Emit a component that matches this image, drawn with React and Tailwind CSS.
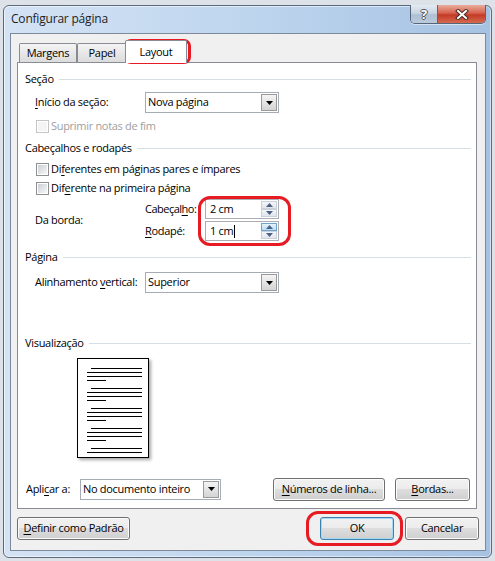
import React from 'react'

function U({ children }) {
  return <span className="underline underline-offset-[2px] decoration-[1px]">{children}</span>
}

function Section({ title, className }) {
  return (
    <div className={`flex items-center h-[14px] pl-[7px] pr-[5px] ${className}`}>
      <span>{title}</span>
      <div className="flex-1 h-px bg-[#d5dfe5] ml-[5px]" />
    </div>
  )
}

function Checkbox({ disabled }) {
  return (
    <span className={`block w-[13px] h-[13px] shrink-0 border p-px bg-white ${disabled ? 'border-[#c5c5c5]' : 'border-[#8e8f8f]'}`}>
      <span className={`block w-full h-full ${disabled ? 'bg-[#f4f4f4]' : 'bg-linear-to-br from-[#cbcfd5] to-[#f7f7f7]'}`} />
    </span>
  )
}

function Select({ value, className }) {
  return (
    <div className={`flex h-[21px] bg-white border border-[#a5acb5] ${className}`}>
      <span className="flex-1 flex items-center pl-[2px]">{value}</span>
      <span className="w-[16px] m-px flex items-center justify-center border border-[#9a9a9a] bg-linear-to-b from-[#f4f4f4] to-[#d4d4d4]">
        <svg width="7" height="4" viewBox="0 0 7 4">
          <path d="M0 0h7L3.5 4z" fill="#000" />
        </svg>
      </span>
    </div>
  )
}

function SpinBtn({ up, hot }) {
  return (
    <span className={`flex-1 flex items-center justify-center border ${hot ? 'border-[#6fa3c9] bg-linear-to-b from-[#e6f3fb] to-[#b9dcf3]' : 'border-[#c9d2dc] bg-linear-to-b from-[#f3f5f8] to-[#e1e6ec]'}`}>
      <svg width="7" height="4" viewBox="0 0 7 4">
        <path d={up ? 'M0 4h7L3.5 0z' : 'M0 0h7L3.5 4z'} fill="#4d6185" />
      </svg>
    </span>
  )
}

function Spin({ value, caret, hot }) {
  return (
    <div className="flex h-[20px] w-[74px] bg-white border border-[#abadb3]">
      <span className="flex-1 flex items-center pl-[4px]">
        {value}
        {caret && <span className="w-px h-[13px] bg-black ml-px" />}
      </span>
      <div className="flex flex-col w-[16px] my-px mr-px">
        <SpinBtn up hot={hot} />
        <SpinBtn />
      </div>
    </div>
  )
}

function Btn({ children, className, def }) {
  return (
    <div
      className={`flex items-center justify-center h-[23px] rounded-[3px] border whitespace-nowrap bg-[linear-gradient(#f2f2f2,#ebebeb_50%,#dddddd_50%,#cfcfcf)] ${
        def ? 'border-[#3c7fb1] shadow-[inset_0_0_0_1px_#a7d9f5]' : 'border-[#707070] shadow-[inset_0_0_0_1px_#fbfbfb]'
      } ${className}`}
    >
      {children}
    </div>
  )
}

function Tab({ children, className }) {
  return (
    <div className={`flex items-center justify-center border border-b-0 border-[#898c95] rounded-t-[2px] ${className}`}>
      {children}
    </div>
  )
}

function Line({ w, ml, mt }) {
  return <div className={`h-px bg-black ${w} ${ml} ${mt}`} />
}

function Group({ lines, first }) {
  return (
    <div className={first ? '' : 'mt-[7px]'}>
      <Line w="w-[51px]" ml="ml-[13px]" mt="" />
      {lines > 1 && <Line w="w-[55px]" ml="ml-[9px]" mt="mt-[3px]" />}
      {lines > 2 && <Line w="w-[55px]" ml="ml-[9px]" mt="mt-[3px]" />}
      {lines > 3 && <Line w="w-[19px]" ml="ml-[9px]" mt="mt-[3px]" />}
    </div>
  )
}

export default function App() {
  return (
    <div className="w-[495px] h-[561px] bg-[#dde2e8] relative overflow-hidden whitespace-nowrap font-['Open_Sans','Liberation_Sans',Arial,sans-serif] text-[11px] tracking-[-0.3px] text-black">
      <div className="ml-[3px] mt-[5px] w-[489px] h-[553px] rounded-[6px] border border-[#5b6a7c] bg-linear-to-r from-[#d4e3f4] via-[#bed5ee] to-[#a6c2e3] shadow-[inset_0_0_0_1px_rgba(255,255,255,0.55)] flex flex-col pl-[6px] pr-[5px] pb-[6px]">
        {/* title bar */}
        <div className="flex h-[27px] shrink-0">
          <span className="pl-[1px] pt-[5px] text-[12px] leading-[16px] tracking-[-0.2px] text-[#1e1e1e]">Configurar página</span>
          <div className="ml-auto -mt-px flex h-[19px] rounded-b-[5px] border border-t-0 border-[#566679] overflow-hidden shadow-[0_1px_0_rgba(255,255,255,0.5)]">
            <div className="w-[27px] flex items-center justify-center border-r border-[#566679] bg-[linear-gradient(#e3eaf2,#c9d5e3_45%,#aebfd3_55%,#bccbdc)]">
              <span className="font-bold text-[13px] leading-none text-white [text-shadow:-1px_0_#4a5562,1px_0_#4a5562,0_-1px_#4a5562,0_1px_#4a5562]">?</span>
            </div>
            <div className="w-[47px] flex items-center justify-center bg-[linear-gradient(#e9ab9c,#d6624e_45%,#c43a24_55%,#d66a52)]">
              <svg width="14" height="11" viewBox="0 0 14 11">
                <path d="M3 2l8 7M11 2l-8 7" stroke="#4a2a26" strokeWidth="4" strokeLinecap="square" />
                <path d="M3 2l8 7M11 2l-8 7" stroke="#fff" strokeWidth="2" strokeLinecap="square" />
              </svg>
            </div>
          </div>
        </div>

        {/* client */}
        <div className="h-[518px] border border-[#7d8a99] bg-[#f0f0f0] flex flex-col">
          <div className="mt-[6px] flex items-end h-[22px] pl-[8px] relative z-10">
            <Tab className="w-[58px] h-[19px] bg-linear-to-b from-[#f4f4f4] to-[#dcdcdc]">Margens</Tab>
            <Tab className="w-[50px] h-[19px] bg-linear-to-b from-[#f4f4f4] to-[#dcdcdc]">Papel</Tab>
            <Tab className="w-[62px] h-[23px] -ml-[2px] -mb-px bg-white">Layout</Tab>
          </div>

          <div className="ml-[6px] w-[460px] h-[447px] border border-[#898c95] bg-white flex flex-col">
            <Section title="Seção" className="mt-[9px]" />
            <div className="mt-[6px] flex items-center h-[21px] pl-[17px]">
              <span className="w-[110px]"><U>I</U>nício da seção:</span>
              <Select value="Nova página" className="w-[134px]" />
            </div>
            <div className="mt-[7px] flex items-center h-[13px] pl-[18px] gap-[2px] text-[#a0a0a0]">
              <Checkbox disabled />
              <span>Suprimir notas de fim</span>
            </div>

            <Section title="Cabeçalhos e rodapés" className="mt-[8px]" />
            <div className="mt-[8px] flex items-center h-[13px] pl-[18px] gap-[2px]">
              <Checkbox />
              <span>Di<U>f</U>erentes em páginas pares e ímpares</span>
            </div>
            <div className="mt-[6px] flex items-center h-[13px] pl-[18px] gap-[2px]">
              <Checkbox />
              <span>Dif<U>e</U>rente na primeira página</span>
            </div>
            <div className="mt-[4px] flex items-center pl-[17px]">
              <span className="w-[110px]">Da borda:</span>
              <div className="flex flex-col gap-[2px]">
                <div className="flex items-center">
                  <span className="w-[60px] tracking-[-0.5px]">Cabeçal<U>h</U>o:</span>
                  <Spin value="2 cm" />
                </div>
                <div className="flex items-center">
                  <span className="w-[60px]"><U>R</U>odapé:</span>
                  <Spin value="1 cm" caret hot />
                </div>
              </div>
            </div>

            <Section title="Página" className="mt-[9px]" />
            <div className="mt-[8px] flex items-center h-[21px] pl-[17px]">
              <span className="w-[110px]">Alinhamento <U>v</U>ertical:</span>
              <Select value="Superior" className="w-[134px]" />
            </div>

            <Section title="Visualização" className="mt-[43px]" />
            <div className="mt-[8px] ml-[59px] w-[72px] h-[100px] border border-black bg-white shadow-[2px_2px_3px_rgba(0,0,0,0.35)] pt-[9px]">
              <Group lines={4} first />
              <Group lines={4} />
              <Group lines={4} />
              <Group lines={4} />
              <Group lines={2} />
            </div>

            <div className="mt-[20px] flex items-center h-[22px] pl-[8px] pr-[6px]">
              <span className="w-[54px]">Apli<U>c</U>ar a:</span>
              <Select value="No documento inteiro" className="w-[141px]" />
              <Btn className="ml-auto w-[112px] h-[22px]"><span><U>N</U>úmeros de linha...</span></Btn>
              <Btn className="ml-[10px] w-[75px] h-[22px]"><span><U>B</U>ordas...</span></Btn>
            </div>
          </div>

          <div className="mt-[8px] flex items-center pl-[6px] pr-[6px]">
            <Btn className="w-[113px]"><span><U>D</U>efinir como Padrão</span></Btn>
            <Btn def className="ml-auto w-[74px]">OK</Btn>
            <Btn className="ml-[11px] w-[74px]">Cancelar</Btn>
          </div>
        </div>
      </div>

      {/* red annotations */}
      <div className="absolute left-[124px] top-[39px] w-[67px] h-[25px] border-[3px] border-[#e61b23] rounded-[7px]" />
      <div className="absolute left-[198px] top-[196px] w-[93px] h-[50px] border-[3px] border-[#e61b23] rounded-[12px]" />
      <div className="absolute left-[306px] top-[511px] w-[97px] h-[35px] border-[3px] border-[#e61b23] rounded-[12px]" />
    </div>
  )
}
